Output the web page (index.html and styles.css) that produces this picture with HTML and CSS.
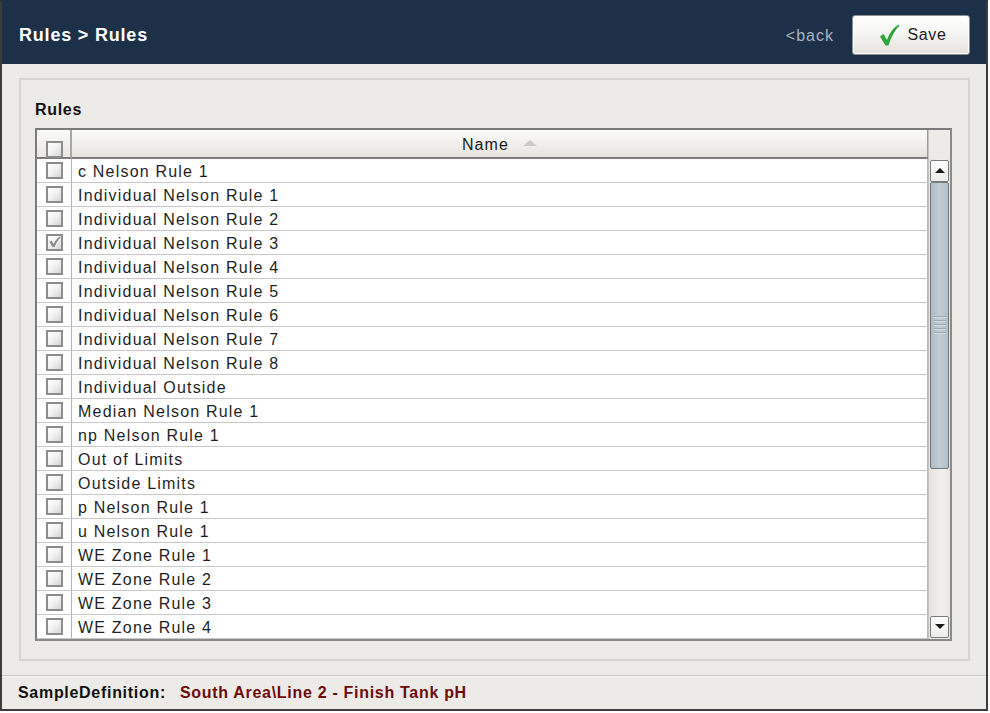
FILE: index.html
```html
<!DOCTYPE html>
<html lang="en">
<head>
<meta charset="utf-8">
<title>Rules</title>
<link rel="stylesheet" href="styles.css">
</head>
<body>
<div class="app">
  <header class="topbar">
    <h1 class="title">Rules &gt; Rules</h1>
    <div class="actions">
      <span class="back">&lt;back</span>
      <button class="save" type="button">
        <svg class="save-icon" width="22" height="24" viewBox="0 0 22 24"><path d="M2 13.5 L5.5 11 L9 17 C11.5 10 15 5 20.5 1.5 L21.5 2.5 C16.5 7.5 13 14 10.5 22.5 L7.5 22.5 Z" fill="#2ea43c"/></svg>
        <span>Save</span>
      </button>
    </div>
  </header>
  <main class="content">
    <section class="panel">
      <h2 class="panel-title">Rules</h2>
      <div class="grid">
        <div class="grid-head">
          <div class="hcell-check"><span class="cb"></span></div>
          <div class="hcell-name">Name <span class="sort"></span></div>
          <div class="hcell-scroll"></div>
        </div>
        <div class="grid-body">
          <div class="rows">
            <div class="row"><div class="cell-check"><span class="cb"></span></div><div class="cell-name">c Nelson Rule 1</div></div>
            <div class="row"><div class="cell-check"><span class="cb"></span></div><div class="cell-name">Individual Nelson Rule 1</div></div>
            <div class="row"><div class="cell-check"><span class="cb"></span></div><div class="cell-name">Individual Nelson Rule 2</div></div>
            <div class="row"><div class="cell-check"><span class="cb checked"><svg width="13" height="12" viewBox="0 0 13 12"><path d="M1.5 6 L3.5 4.5 L5.5 8 C7.5 4.5 9.5 2 12 0.5 L12.5 1.5 C10 4 8 7 6.5 11 L4.5 11 Z" fill="#8a8a8a"/></svg></span></div><div class="cell-name">Individual Nelson Rule 3</div></div>
            <div class="row"><div class="cell-check"><span class="cb"></span></div><div class="cell-name">Individual Nelson Rule 4</div></div>
            <div class="row"><div class="cell-check"><span class="cb"></span></div><div class="cell-name">Individual Nelson Rule 5</div></div>
            <div class="row"><div class="cell-check"><span class="cb"></span></div><div class="cell-name">Individual Nelson Rule 6</div></div>
            <div class="row"><div class="cell-check"><span class="cb"></span></div><div class="cell-name">Individual Nelson Rule 7</div></div>
            <div class="row"><div class="cell-check"><span class="cb"></span></div><div class="cell-name">Individual Nelson Rule 8</div></div>
            <div class="row"><div class="cell-check"><span class="cb"></span></div><div class="cell-name">Individual Outside</div></div>
            <div class="row"><div class="cell-check"><span class="cb"></span></div><div class="cell-name">Median Nelson Rule 1</div></div>
            <div class="row"><div class="cell-check"><span class="cb"></span></div><div class="cell-name">np Nelson Rule 1</div></div>
            <div class="row"><div class="cell-check"><span class="cb"></span></div><div class="cell-name">Out of Limits</div></div>
            <div class="row"><div class="cell-check"><span class="cb"></span></div><div class="cell-name">Outside Limits</div></div>
            <div class="row"><div class="cell-check"><span class="cb"></span></div><div class="cell-name">p Nelson Rule 1</div></div>
            <div class="row"><div class="cell-check"><span class="cb"></span></div><div class="cell-name">u Nelson Rule 1</div></div>
            <div class="row"><div class="cell-check"><span class="cb"></span></div><div class="cell-name">WE Zone Rule 1</div></div>
            <div class="row"><div class="cell-check"><span class="cb"></span></div><div class="cell-name">WE Zone Rule 2</div></div>
            <div class="row"><div class="cell-check"><span class="cb"></span></div><div class="cell-name">WE Zone Rule 3</div></div>
            <div class="row"><div class="cell-check"><span class="cb"></span></div><div class="cell-name">WE Zone Rule 4</div></div>
          </div>
          <div class="scrollbar">
            <div class="sb-btn"><span class="tri-up"></span></div>
            <div class="sb-thumb"><span class="grip"></span></div>
            <div class="sb-track"></div>
            <div class="sb-btn"><span class="tri-down"></span></div>
          </div>
        </div>
      </div>
    </section>
  </main>
  <footer class="footer">
    <span class="f-label">SampleDefinition:</span>
    <span class="f-value">South Area\Line 2 - Finish Tank pH</span>
  </footer>
</div>
</body>
</html>
```
FILE: styles.css
```css
* { box-sizing: border-box; }
html, body { margin: 0; padding: 0; background: #ffffff; }
body { font-family: "Liberation Sans", Arial, sans-serif; color: #222; }

.app {
  width: 988px;
  height: 711px;
  border: 2px solid #3c3c3c;
  border-top-color: #1c3048;
  background: #ecebe7;
  display: flex;
  flex-direction: column;
}

.topbar {
  height: 63px;
  background: #1c3048;
  display: flex;
  align-items: center;
  justify-content: space-between;
  padding: 4px 16px 0 17px;
}
.title {
  margin: 0;
  color: #ffffff;
  font-size: 18px;
  font-weight: bold;
  letter-spacing: 0.8px;
  padding-top: 1px;
}
.actions { display: flex; align-items: center; gap: 18px; }
.back {
  color: #a9b2bd;
  font-size: 16px;
  letter-spacing: 1px;
  padding-top: 2px;
}
.save {
  width: 118px;
  height: 40px;
  border: 1px solid #8d8d8d;
  border-radius: 3px;
  background: linear-gradient(#ffffff, #f4f4f2 50%, #e3e2df);
  box-shadow: inset 0 0 0 1px #ffffff;
  display: flex;
  align-items: center;
  justify-content: center;
  gap: 8px;
  padding: 0 0 0 2px;
  font-family: "Liberation Sans", Arial, sans-serif;
  font-size: 16px;
  letter-spacing: 0.6px;
  color: #1e1e1e;
}
.save-icon { display: block; margin-top: 1px; }

.content {
  flex: 1;
  display: flex;
  padding: 14px 16px 14px 17px;
}
.panel {
  flex: 1;
  border: 2px solid #d6d5d1;
  padding: 20px 16px 18px 14px;
  display: flex;
  flex-direction: column;
}
.panel-title {
  margin: 0 0 8px 0;
  font-size: 16px;
  line-height: 20px;
  font-weight: bold;
  letter-spacing: 0.7px;
  color: #111;
}

.grid {
  flex: 1;
  border: 2px solid #7b7b7b;
  border-right-color: #8a8a8a;
  border-bottom-color: #8a8a8a;
  display: flex;
  flex-direction: column;
  overflow: hidden;
  background: #ffffff;
}
.grid-head {
  height: 29px;
  display: flex;
}
.hcell-check {
  width: 35px;
  border-right: 2px solid #a8a8a8;
  border-bottom: 2px solid #7b7b7b;
  background: linear-gradient(#fbfbfa, #e8e7e3);
  display: flex;
  align-items: flex-end;
  justify-content: center;
}
.hcell-check .cb { margin-left: 2px; margin-bottom: -1px; }
.hcell-name {
  flex: 1;
  border-bottom: 2px solid #7b7b7b;
  border-right: 1px solid #9a9a9a;
  background: linear-gradient(#fbfbfa, #f1f0ed 50%, #e4e3df);
  display: flex;
  align-items: center;
  justify-content: center;
  font-size: 16px;
  letter-spacing: 1.1px;
  color: #1a1a1a;
  padding-top: 3px;
}
.sort {
  display: inline-block;
  width: 0; height: 0;
  border-left: 7px solid transparent;
  border-right: 7px solid transparent;
  border-bottom: 6px solid #c9c9c9;
  margin-left: 14px;
  margin-top: -3px;
}
.hcell-scroll {
  width: 22px;
  background: #ecebe7;
  border-left: 1px solid #c4c3bf;
}

.grid-body {
  flex: 1;
  display: flex;
  overflow: hidden;
}
.rows { flex: 1; overflow: hidden; }
.row {
  height: 24px;
  display: flex;
  border-bottom: 1px solid #c8c8c8;
}
.cell-check {
  width: 35px;
  border-right: 1px solid #b3b3b3;
  display: flex;
  align-items: center;
  justify-content: center;
  padding-left: 1px;
}
.cell-name {
  flex: 1;
  padding: 1px 0 0 6px;
  font-size: 16px;
  line-height: 23px;
  letter-spacing: 1.2px;
  color: #1f1f1f;
  border-right: 1px solid #b9b9b9;
}

.cb {
  width: 17px;
  height: 17px;
  border: 2px solid #8c8c8c;
  background: linear-gradient(135deg, #ffffff, #f1f1f1 50%, #d6d6d6);
  display: flex;
  align-items: center;
  justify-content: center;
}
.cb svg { display: block; }

.scrollbar {
  width: 22px;
  background: linear-gradient(90deg, #e4e3df, #f2f1ef 60%, #e6e5e1);
  border-left: 1px solid #c4c3bf;
  display: flex;
  flex-direction: column;
  padding: 1px 0 1px 0;
}
.sb-btn {
  height: 22px;
  margin: 0 1px 0 1px;
  border: 1px solid #7c7c7c;
  border-radius: 2px;
  background: linear-gradient(#ffffff, #ececea);
  display: flex;
  align-items: center;
  justify-content: center;
}
.tri-up {
  width: 0; height: 0;
  border-left: 5px solid transparent;
  border-right: 5px solid transparent;
  border-bottom: 5px solid #1c1c1c;
}
.tri-down {
  width: 0; height: 0;
  border-left: 5px solid transparent;
  border-right: 5px solid transparent;
  border-top: 5px solid #1c1c1c;
}
.sb-thumb {
  height: 287px;
  margin: 0 1px;
  border: 1px solid #6f7980;
  border-radius: 2px;
  background: linear-gradient(90deg, #aebbc4, #c2cdd4 50%, #b3bfc7);
  display: flex;
  align-items: center;
  justify-content: center;
}
.grip {
  width: 12px;
  height: 19px;
  background: repeating-linear-gradient(#9eaab2 0 1px, #d3dce2 1px 2px, transparent 2px 4px);
}
.sb-track { flex: 1; }

.footer {
  height: 35px;
  border-top: 1px solid #c8c7c3;
  box-shadow: inset 0 1px 0 #f7f7f5;
  display: flex;
  align-items: center;
  gap: 14px;
  padding: 1px 0 0 16px;
  font-size: 16px;
  font-weight: bold;
  letter-spacing: 0.7px;
}
.f-label { color: #111; }
.f-value { color: #6e0a0a; }
```
